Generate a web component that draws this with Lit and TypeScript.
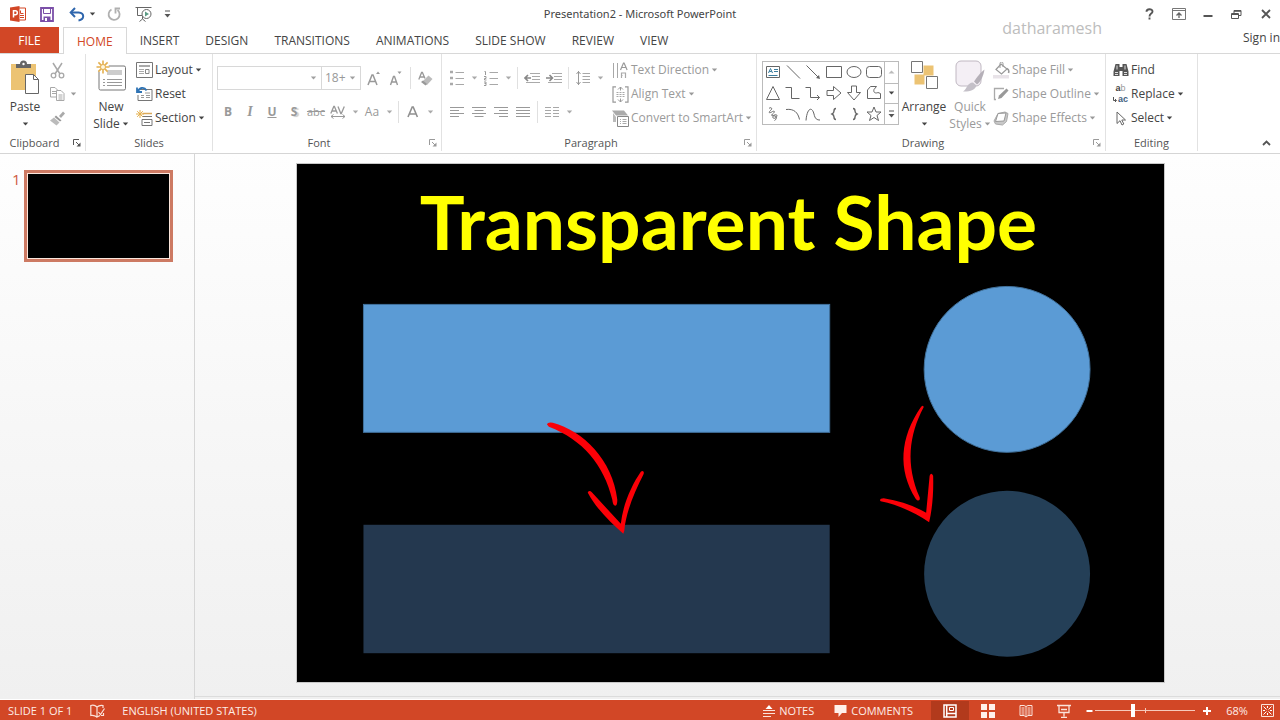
import { LitElement, html, svg, css, TemplateResult, SVGTemplateResult } from "lit";
import { customElement, property, state } from "lit/decorators.js";
import { classMap } from "lit/directives/class-map.js";

const G = "#767676";
const D = "#a8a8a8";

const pic = (w: number, h: number, body: SVGTemplateResult) =>
  html`<svg width=${w} height=${h} viewBox="0 0 ${w} ${h}" fill="none" aria-hidden="true">${body}</svg>`;

const icons: Record<string, TemplateResult> = {
  caret: pic(7, 4, svg`<path d="M.8 .5h5.400L3.500 3.500z" fill="currentColor"/>`),
  logo: pic(18, 18, svg`<path d="M9 3h7.500v12H9z" fill="#fff" stroke="#d24726"/><path d="M11.500 5.500v3h3M11 10.500h4M11 12.500h4" stroke="#d24726"/><path d="M1 2.500 10.500 1v16L1 15.500z" fill="#d24726"/><path d="M4.500 12.500V5.800H6.300a2 2 0 0 1 0 4H4.500" stroke="#fff" stroke-width="1.500"/>`),
  save: pic(14, 15, svg`<path d="M1 1h12v13H1z" stroke="#7b4fa8" stroke-width="1.800"/><path d="M3.500 1.500v5h7v-5" stroke="#7b4fa8"/><path d="M3.500 9.500h7V14h-7z" fill="#7b4fa8"/><path d="M5 11h2v3H5z" fill="#fff"/>`),
  undo: pic(16, 15, svg`<path d="M2 5.500H9.500C16 6 15.500 12.500 9.500 13.500" stroke="#2f66ad" stroke-width="2"/><path d="M6 1 1.700 5.500 6 10" stroke="#2f66ad" stroke-width="2"/>`),
  redo: pic(14, 15, svg`<path d="M4.500 2.500A5.500 5.500 0 1 0 10.500 3" stroke="#b0b0b0" stroke-width="1.800"/><path d="M8.500 6.500V1.500H13" stroke="#b0b0b0" stroke-width="1.800"/>`),
  startShow: pic(17, 17, svg`<path d="M.5 1.500h16M2.500 2v7.500h5M7.500 10v3M4.500 15.500l3-2.500 3 2.500" stroke="#666"/><circle cx="11.500" cy="8" r="4.500" fill="#fff" stroke="#666"/><path d="M10 5.500v5l4-2.500z" fill="#5a9b84"/>`),
  more: pic(7, 8, svg`<path d="M1 1h5" stroke="#555"/><path d="M.5 4h6l-3 3.500z" fill="#555"/>`),
  help: pic(9, 12, svg`<path d="M1.500 3.800C1.500 .5 7.500 .5 7.500 3.500 7.500 5.800 4.500 5.500 4.500 8.500M4.500 9.500v2" stroke="#555" stroke-width="1.900"/>`),
  ribbonOpt: pic(14, 12, svg`<path d="M.5 .5h13v11H.5zM.5 2.500h13" stroke="#777"/><path d="M7 10V5M4.500 7.500 7 5l2.500 2.500" stroke="#666" stroke-width="1.300"/>`),
  min: pic(10, 12, svg`<path d="M.5 8h9" stroke="#555" stroke-width="2"/>`),
  restore: pic(11, 11, svg`<path d="M.5 4.500h7v5h-7zM.5 5.500h7M3 4V1.500h7v5H8M3 2.300h7" stroke="#555"/>`),
  close: pic(10, 10, svg`<path d="m1 1 8 8M9 1 1 9" stroke="#555" stroke-width="1.800"/>`),
  paste: pic(30, 35, svg`<path d="M1 4h25v26H1z" fill="#ecc373"/><path d="M6 4h4a3.500 3.500 0 0 1 7 0h4v4H6z" fill="#666"/><circle cx="13.500" cy="4" r="1.200" fill="#fff"/><path d="M15.500 14.500h8l5 5v14h-13z" fill="#fff" stroke="#666"/><path d="M23.500 14.500v5h5" stroke="#666"/>`),
  cut: pic(15, 17, svg`<path d="m3 1 7 11M12 1 5 12" stroke="${D}" stroke-width="1.500"/><circle cx="3.500" cy="13.500" r="2.300" stroke="${D}" stroke-width="1.300"/><circle cx="11.500" cy="13.500" r="2.300" stroke="${D}" stroke-width="1.300"/>`),
  copy: pic(15, 14, svg`<path d="M.5 .5H5l2.500 2.500v7h-7z" stroke="${D}"/><path d="M2 4.500h4M2 6.500h4" stroke="${D}"/><path d="M6.500 3.500H11l3 3v7H6.500z" fill="#fff" stroke="${D}"/><path d="M8.500 8h4M8.500 10h4M8.500 12h4" stroke="${D}"/>`),
  brush: pic(16, 15, svg`<path d="m9 5 4-4.500 2 2L11 7z" fill="#aaa"/><path d="m6 4.500 5.500 5-1.500 1L4.500 6z" fill="#999"/><path d="M4 6.500 9.500 11.500 6.500 14.500 0 9.500z" fill="#bbb"/>`),
  newSlide: pic(31, 31, svg`<rect x="3" y="6" width="26.500" height="24" rx="1.500" fill="#fff" stroke="${G}"/><path d="M11 10h15v5H11z" fill="#ccc"/><path d="M7 19.500h2M11 19.500h15M7 22.500h2M11 22.500h15M7 25.500h2M11 25.500h15" stroke="#999"/><circle cx="7" cy="7" r="6" fill="#fff"/><path d="M7 .5v13M.5 7h13M2.400 2.400l9.200 9.200M11.600 2.400l-9.200 9.200" stroke="#e4b04f" stroke-width="1.600"/><circle cx="7" cy="7" r="2.500" fill="#fff6dd" stroke="#e4b04f"/>`),
  layout: pic(17, 16, svg`<path d="M.5 .5h16v15H.5z" stroke="${G}"/><path d="M3 3h11v2H3z" fill="#aaa"/><path d="M3 7.500h5M3 9.500h5M3 11.500h5" stroke="#aaa"/><path d="M9.500 7.500H13v4H9.500z" stroke="#888"/>`),
  reset: pic(17, 16, svg`<path d="M4 3.500h12v11H2V9" stroke="${G}"/><path d="M9 7h5M5 9.500h3M10 9.500h4M5 11.500h3M10 11.500h4" stroke="#999"/><path d="M2 5.500C3 2 8 0 10.500 4.500M1 1.500V6h5" stroke="#2f74b5" stroke-width="1.800"/>`),
  section: pic(17, 17, svg`<path d="M6.500 3.500H16" stroke="#dba95a" stroke-width="1.500"/><path d="M6 6.500h10" stroke="${G}"/><path d="M6 9.500h10v6H6zM8 12.500h6" stroke="${G}"/><path d="M4 0v8M0 4h8M1.200 1.200l5.600 5.600M6.800 1.200 1.200 6.800" stroke="#e4b04f"/>`),
  growFont: pic(14, 15, svg`<path d="m1 14 4-10h1l4 10M2.500 10.500h6" stroke="#999" stroke-width="1.500"/><path d="m9 3 2-2.500L13 3z" fill="#999"/>`),
  shrinkFont: pic(14, 15, svg`<path d="m1.500 14 3-8.500h1l3 8.500M3 11h4.500" stroke="#999" stroke-width="1.400"/><path d="m8.500 .5 2 2.500 2-2.500z" fill="#999"/>`),
  clear: pic(15, 15, svg`<path d="m.8 8.500 2.800-7h.8l2.600 6M2 6h4" stroke="#999" stroke-width="1.300"/><path d="M4 11 10.500 4.500l4 3.500L9 14z" fill="#bbb"/><path d="m3 11 2-1.500 4 3.500-1.500 1.500z" fill="#999"/>`),
  spacing: pic(16, 14, svg`<path d="m.8 8.500 3-7h.6l3 7M1.800 6h4.500M8 1.500l2.800 7h.5l3-7" stroke="#999" stroke-width="1.300"/><path d="M1 11.500h14M3.500 9.500l-2.500 2 2.500 2M12.500 9.500l2.500 2-2.500 2" stroke="#999"/>`),
  fontColor: pic(12, 12, svg`<path d="m1 11 4.200-10h1l4.200 10M2.500 8h6.500" stroke="#909090" stroke-width="1.600"/>`),
  bullets: pic(14, 16, svg`<path d="M0 2h3M0 8h3M0 14h3" stroke="#aaa" stroke-width="2.500"/><path d="M5.500 2.500H14M5.500 8.500H14M5.500 14.500H14" stroke="${D}"/>`),
  numbers: pic(14, 17, svg`<path d="M.5 1.500h1V5M0 6.500h2v2H.5V10h2M0 12h2v3.500H0M.5 13.500H2" stroke="#999"/><path d="M5.500 2.500H14M5.500 8.500H14M5.500 14.500H14" stroke="${D}"/>`),
  outdent: pic(16, 12, svg`<path d="M6 1.500h10M8 4.500h8M8 7.500h8M2 10.500h14" stroke="#aaa"/><path d="M7 6H1.500M4 3 1 6l3 3" stroke="#888" stroke-width="1.600"/>`),
  indent: pic(16, 12, svg`<path d="M6 1.500h10M8 4.500h8M8 7.500h8M2 10.500h14" stroke="#aaa"/><path d="M0 6h6M3.500 3l3 3-3 3" stroke="#888" stroke-width="1.600"/>`),
  lineGap: pic(15, 16, svg`<path d="M2.500 1v14M.5 4l2-2.500 2 2.500M.5 12l2 2.500 2-2.500" stroke="#999"/><path d="M6.500 3.500H14M6.500 6.500H14M6.500 9.500H14M6.500 12.500H14" stroke="${D}"/>`),
  left: pic(14, 12, svg`<path d="M0 1.500h14M0 4.500h9M0 7.500h14M0 10.500h9" stroke="#999"/>`),
  center: pic(14, 12, svg`<path d="M0 1.500h14M2.500 4.500h9M0 7.500h14M2.500 10.500h9" stroke="#999"/>`),
  right: pic(14, 12, svg`<path d="M0 1.500h14M5 4.500h9M0 7.500h14M5 10.500h9" stroke="#999"/>`),
  justify: pic(14, 12, svg`<path d="M0 1.500h14M0 4.500h14M0 7.500h14M0 10.500h14" stroke="#999"/>`),
  columns: pic(14, 12, svg`<path d="M0 1.500h6M0 4.500h6M0 7.500h6M0 10.500h6M8 1.500h6M8 4.500h6M8 7.500h6M8 10.500h6" stroke="${D}"/>`),
  direction: pic(17, 17, svg`<path d="M1.500 1v15M5.500 1v15" stroke="${D}"/><path d="m8.500 8 3-7h.6l3 7M9.800 5.500h4.500" stroke="#999" stroke-width="1.200"/><path d="M9.500 16v-5h4v5M9.500 13.500h1" stroke="${D}" stroke-width="1.200"/>`),
  alignText: pic(17, 17, svg`<path d="M4 .8H1v15.400h3M13 .8h3v15.400h-3" stroke="#999" stroke-width="1.200"/><path d="M8.500 1v3.500M6 3.500l2.500-2.500L11 3.500M8.500 16v-3.500M6 13.500l2.500 2.500 2.500-2.500" stroke="#999"/><path d="M4.500 6.500h8M4.500 8.500h8M4.500 10.500h8" stroke="${D}" stroke-dasharray="2 1"/>`),
  smartArt: pic(17, 17, svg`<path d="M0 .5h12l4 5H4z" fill="#aaa"/><path d="m1 3 3 4v5H1z" fill="#bbb"/><path d="M5.500 6.500h11v10h-11z" fill="#fff" stroke="#888"/><path d="M8 9.500h1M10.500 9.500h4M8 11.500h1M10.500 11.500h4M8 13.500h1M10.500 13.500h4" stroke="#aaa"/>`),
  arrange: pic(28, 30, svg`<path d="M13.500 5.500h10v10h-10z" fill="#ecc373"/><path d="M4.500 14.500h10v10h-10z" fill="#ecc373"/><path d="M1.500 1.500h11v11h-11z" fill="#fff" stroke="${G}"/><path d="M16.500 16.500h11v12h-11z" fill="#fff" stroke="${G}"/>`),
  quick: pic(30, 33, svg`<rect x="1" y="1" width="25" height="25" rx="5" fill="#f4eff5" stroke="#c0b8c2"/><path d="M29.500 9.500c-3 2-8 8-10.500 12l3 3c4-3 6.500-9 7.500-15z" fill="#b5b0b8"/><path d="M18 22.500l3.500 3c-2 6-9 6-13.500 6 4-2 4-9 10-9z" fill="#c4c0c8"/>`),
  fill: pic(17, 17, svg`<path d="M3 7.500 8 2l6 5-5.500 5z" fill="#fff" stroke="#999" stroke-width="1.200"/><path d="M7 6V1.500a1.500 1.500 0 0 1 3 0V5" stroke="#999"/><path d="M14 6.500c2 1 2 3 1.500 4.500" stroke="#999" stroke-width="1.600"/><path d="M0 13h16v3.500H0z" fill="#e8e3e8"/>`),
  outline: pic(17, 15, svg`<path d="M11 1.500H1.500v11H3" stroke="#aaa" stroke-width="1.300"/><path d="m5 12 1-3.500 7.500-7 2 2L8.500 11z" fill="#999"/>`),
  effects: pic(17, 15, svg`<path d="M5 2.500 12 1l3 1.500-1.500 8-4 3.500-7-1L1 10z" fill="#c8c8c8" stroke="#aaa"/><path d="m5 2.500 8-.5-2 8-8.500.5z" fill="#fff" stroke="#999"/>`),
  find: pic(16, 14, svg`<path d="M2.500 1h4v3h3V1h4l2 7.500V13H9.500V8h-3v5H.5V8.500z" fill="#555"/><path d="M2 9.500h3M11 9.500h3M2 11.500h3M11 11.500h3M4 2.500v4M12 2.500v4" stroke="#ddd"/>`),
  replace: html`<span class="rep"><span>a<i>b</i></span><span class="second">${pic(4, 6, svg`<path d="M.5 0v3.500H3M2 2l1.500 1.500L2 5" stroke="#555"/>`)}ac</span></span>`,
  select: pic(10, 15, svg`<path d="M1 1v11.500l3-2.800 2 4.300 1.800-1-2-4H9.500z" fill="#fff" stroke="#666"/>`),
  launcher: pic(8, 8, svg`<path d="M.5 6V.5H6" stroke="currentColor"/><path d="m3 3 3.500 3.500" stroke="currentColor"/><path d="M7.500 3.500v4h-4z" fill="currentColor"/>`),
  collapse: pic(9, 6, svg`<path d="m1 5 3.500-3.500L8 5" stroke="#555" stroke-width="1.800"/>`),
  proof: pic(15, 14, svg`<path d="M7 3C5 1 2 1 .8 1.500v10C3 11 5 11.500 7 13M7 3v10l3-1.500M7 3c1.500-1.300 3.500-2 6-1.500V4" stroke="#fbe3db" stroke-width="1.200"/><path d="m8.500 8 2 2.500 4-6M11 11.500h2.500V9" stroke="#fbe3db" stroke-width="1.200"/>`),
  notes: pic(12, 13, svg`<path d="m2.500 5 3.500-4 3.500 4z" fill="#fff"/><path d="M0 6.500h12M0 9.500h12M0 12.500h8" stroke="#fbe3db"/>`),
  comment: pic(13, 13, svg`<path d="M.5 1h12v8H8l-3.500 4V9h-4z" fill="#fff0ea"/>`),
  normal: pic(14, 14, svg`<path d="M1 1h12v12H1zM3.700 1v12M4 9.500h9" stroke="#fff" stroke-width="1.500"/><path d="M6.500 3.500h4v3h-4z" stroke="#fff"/>`),
  sorter: pic(14, 14, svg`<path d="M0 0h6v6H0zM8 0h6v6H8zM0 8h6v6H0zM8 8h6v6H8z" fill="#fff0ea"/>`),
  reading: pic(14, 14, svg`<path d="M1 1.500h4l2 1 2-1h4v10H9l-2 1.500-2-1.500H1zM7 2.500V13M2.500 4h3M2.500 6h3M2.500 8h3M8.500 4h3M8.500 6h3M8.500 8h3M2.500 10h3M8.500 10h3" stroke="#fbe3db"/>`),
  show: pic(14, 14, svg`<path d="M0 1.500h14M2 2v6.500h10V2M4 5.500h6M7 9v3.500M4 13.500h6" stroke="#fbe3db" stroke-width="1.300"/>`),
  minus: pic(7, 10, svg`<path d="M.5 5h6" stroke="#fff" stroke-width="2"/>`),
  plus: pic(8, 10, svg`<path d="M0 5h8M4 1v8" stroke="#fff" stroke-width="2"/>`),
  fit: pic(13, 13, svg`<path d="M.5 .5h12v12H.5z" stroke="#fbe3db"/><path d="M2.500 2.500l3 3M10.500 2.500l-3 3M2.500 10.500l3-3M10.500 10.500l-3-3M6.500 2v2M6.500 9v2M2 6.500h2M9 6.500h2" stroke="#fff"/>`),
};

const shapeIcons: [string, SVGTemplateResult][] = [
  ["Text Box", svg`<path d="M1.500 2.500h13v11h-13z" stroke="#666"/><path d="m3.500 9 2-4.500 2 4.500M4.200 7.500h2.500M9 5.500h4M9 7.500h4M3.500 11.500h9" stroke="#3b7d9e"/>`],
  ["Line", svg`<path d="m2 1.500 13 13"/>`],
  ["Arrow", svg`<path d="m1.500 1.500 12 12"/><path d="m15 15-1-4-3 3z" fill="#666" stroke="none"/>`],
  ["Rectangle", svg`<path d="M.5 2.500h15v11H.5z"/>`],
  ["Oval", svg`<ellipse cx="8" cy="8" rx="7" ry="5.500"/>`],
  ["Rounded Rectangle", svg`<rect x=".5" y="2.500" width="15" height="11" rx="3"/>`],
  ["Triangle", svg`<path d="M8 1.500 14.500 14.500h-13z"/>`],
  ["Elbow Connector", svg`<path d="M.5 2.500h6v11h8"/>`],
  ["Elbow Arrow", svg`<path d="M.5 2.500h5v10h9M12 10l2.500 2.500-2.500 2.500"/>`],
  ["Right Arrow", svg`<path d="M1 5.500h6.500v-4L15 8l-7.500 6.500v-4H1z"/>`],
  ["Down Arrow", svg`<path d="M5.500 1h5v6.500h4L8 15 1.500 7.500h4z"/>`],
  ["Freeform", svg`<path d="M1.500 13.500V5l3-3.500h6L8 4.500C7 8 10 8.500 12 7.500l2.500 1v5z"/>`],
  ["Scribble", svg`<path d="M4 2.500c2-2 4 0 1.500 2-3 3 0 2.500 2 1 3-1 2 1 0 2.500-2 2 0 2 2 1 3-1 3 1 1 3-2 1-4-1-2-2 3-1 4 3 1 4.500"/>`],
  ["Arc", svg`<path d="M1 3.500c8-1 12 3 13.500 10"/>`],
  ["Curve", svg`<path d="M1 14.500C2 2 7 0 9 8c1 5 3 6 6 6"/>`],
  ["Left Brace", svg`<path d="M10 2.500c-2 0-2 1-2 2.500s0 2-2 3c2 1 2 1.500 2 3s0 2.500 2 2.500" stroke-width="1.400"/>`],
  ["Right Brace", svg`<path d="M7 2.500c2 0 2 1 2 2.500s0 2 2 3c-2 1-2 1.500-2 3s0 2.500-2 2.500" stroke-width="1.400"/>`],
  ["Star", svg`<path d="m8 1 2 5h5l-4 3.500 1.500 5L8 11.500l-4.500 3 1.500-5L1 6h5z"/>`],
];

@customElement("app-root")
export class AppRoot extends LitElement {
  @state() private zoom = 37;
  @property({ type: String }) active = "HOME";

  static styles = css`
    :host {
      display: flex;
      flex-direction: column;
      min-height: 100vh;
      overflow: hidden;
      background: #fff;
      color: #444;
      font: 12px/16px "Open Sans", "Noto Sans", sans-serif;
      position: relative;
    }
    * { box-sizing: border-box; }
    svg { display: block; flex: none; }
    button, select {
      font: inherit;
      color: inherit;
      background: none;
      border: 0;
      padding: 0;
      margin: 0;
      white-space: nowrap;
    }
    button { display: flex; align-items: center; justify-content: center; }
    .off { color: #9a9a9a; }

    .titlebar { display: grid; grid-template-columns: 1fr auto 1fr; align-items: center; height: 27px; }
    .titlebar h1 { margin: 0; font: 400 11px/28px "Noto Sans", sans-serif; }
    .quick-bar { display: flex; align-items: center; padding-left: 8px; }
    .quick-bar button { width: 20px; margin-right: 9px; height: 24px; }
    .quick-bar .undo { width: 28px; gap: 4px; margin-right: 8px; margin-left: 2px; }
    .quick-bar .more { width: 8px; margin: 0; }
    .quick-bar .show { margin-right: 10px; }
    .window { display: flex; justify-content: flex-end; }
    .window button { width: 29px; height: 24px; }
    .watermark { position: absolute; top: 16px; right: 178px; font: 16px/24px "Open Sans", sans-serif; color: #bdbdbd; }

    .tabs { display: flex; height: 27px; border-bottom: 1px solid #d8d8d8; align-items: stretch; }
    .tabs button { padding: 2px 13px 0; color: #444; }
    .tabs .file { background: #d24726; color: #fff; width: 59px; margin-right: 4px; }
    .tabs .on { color: #d24726; border: 1px solid #d8d8d8; border-bottom: 0; background: #fff; margin-bottom: -1px; }
    .tabs .sign { margin-left: auto; padding: 0; align-items: flex-start; line-height: 22px; }

    .ribbon { display: flex; height: 100px; border-bottom: 1px solid #d5d5d5; background: #fff; }
    .group { display: flex; flex-direction: column; padding-top: 4px; border-right: 1px solid #e2e2e2; margin-bottom: 2px; }
    .body { flex: 1; display: flex; align-items: flex-start; }
    .foot { display: flex; align-items: center; text-align: center; height: 16px; font-size: 11px; color: #555; }
    .foot .name { flex: 1; }
    .foot button { width: 16px; height: 16px; }
    .g-clip { width: 86px; }
    .g-slides { width: 127px; }
    .g-font { width: 229px; }
    .g-font .body { padding-left: 4px; }
    .g-para { width: 315px; }
    .g-para .body { padding-left: 4px; }
    .g-para .stack { margin-left: 6px; }
    .g-draw { width: 349px; }
    .g-draw .big { width: 46px; }
    .g-edit { width: 92px; }
    .g-edit .body { padding-left: 6px; }
    .rest { flex: 1; display: flex; align-items: flex-end; justify-content: flex-end; padding: 0 9px 7px 0; }

    .big { flex: none; flex-direction: column; justify-content: flex-start; width: 50px; height: 74px; padding-top: 2px; }
    .big .pict { height: 38px; display: flex; align-items: flex-start; }
    .big .line { line-height: 17px; display: flex; align-items: center; gap: 2px; min-height: 17px; }
    .stack { display: grid; grid-auto-rows: 24px; }
    .item { justify-content: flex-start; gap: 2px; }
    .item .pict { width: 17px; display: flex; justify-content: center; }
    .tiny { width: 34px; justify-content: flex-start; gap: 5px; }

    .col { display: flex; flex-direction: column; padding-top: 8px; }
    .row { display: flex; align-items: center; height: 24px; }
    .row + .row { margin-top: 10px; }
    .tool { width: 22px; height: 22px; color: #999; }
    .drop { width: 12px; height: 22px; color: #aaa; }
    .sep { width: 1px; height: 22px; background: #e0e0e0; margin: 0 3px; }
    .b { font-weight: 700; }
    .i { font-style: italic; font-family: "Liberation Serif", serif; font-size: 14px; font-weight: 700; }
    .u { text-decoration: underline; font-weight: 700; }
    .s { font-weight: 700; text-shadow: 2px 1px 1px #ccc; }
    .k { text-decoration: line-through; font-size: 11px; }
    .combo { display: grid; align-items: center; height: 24px; border: 1px solid #d8d8d8; color: #a0a0a0; }
    .combo select { grid-area: 1 / 1; width: 100%; height: 22px; appearance: none; padding: 0 3px; color: #999; }
    .combo .mark { grid-area: 1 / 1; justify-self: end; padding-right: 4px; pointer-events: none; }
    .face { width: 105px; }
    .size { width: 40px; margin-left: -1px; margin-right: 2px; }

    .gallery { flex: none; display: grid; grid-template-columns: 1fr 14px; width: 137px; height: 64px; margin: 3px 2px 0 5px; border: 1px solid #bbb; }
    .shapes { display: grid; grid-template-columns: repeat(6, 1fr); grid-template-rows: repeat(3, 1fr); }
    .scroll { display: grid; grid-template-rows: repeat(3, 1fr); border-left: 1px solid #bbb; }
    .scroll button + button { border-top: 1px solid #bbb; }
    .rep { display: flex; flex-direction: column; font: 700 9px/11px "Liberation Sans", sans-serif; }
    .rep i { font-style: normal; font-weight: 400; color: #999; }
    .second { display: flex; align-items: center; gap: 1px; color: #41617f; }

    .work { flex: 1; display: flex; background: linear-gradient(#fefefe, #f0f0f0); border-bottom: 1px solid #fff; }
    .thumbs { width: 195px; border-right: 1px solid #d6d6d6; display: flex; align-items: flex-start; gap: 4px; padding: 16px 0 0 12px; }
    .thumbs .num { font-size: 15px; line-height: 18px; color: #cf5b42; width: 8px; }
    .thumbs .thumb { flex: none; width: 149px; height: 92px; border: 3px solid #cd7a63; padding: 1px; background: #fbe6dc; }
    .thumb span { display: block; width: 100%; height: 100%; background: #000; }
    .stage { flex: 1; display: flex; flex-direction: column; align-items: center; padding: 10px 14px 0 0; }
    .slide { width: 81%; aspect-ratio: 868 / 518; position: relative; background: #000; outline: 1px solid #c8c8c8; }
    .slide svg { width: 100%; height: 100%; }
    .slide h2 { position: absolute; inset: 0 4px auto 0; margin: 0; text-align: center; color: #ff0; font: 700 75px/114px "Lato", sans-serif; }
    .notes-edge { align-self: stretch; margin: auto -14px 2px 0; border-top: 1px solid #dcdcdc; }

    .status { display: flex; align-items: center; height: 20px; background: #d24726; color: #fdece6; font-size: 11px; padding: 1px 6px 0 8px; }
    .status button { height: 19px; gap: 4px; }
    .status .proof { margin: 0 17px 0 18px; }
    .status .push { margin-left: auto; }
    .status .comments { margin: 0 18px 0 20px; }
    .status .view { width: 38px; }
    .status .cur { background: #b23a1c; }
    .zoom { display: grid; align-items: center; width: 100px; }
    .zoom input { grid-area: 1 / 1; width: 100%; margin: 0; height: 14px; appearance: none; background: linear-gradient(#f6c9bb, #f6c9bb) center / 100% 1px no-repeat; }
    .zoom input::-webkit-slider-thumb { appearance: none; width: 4px; height: 13px; background: #fff; }
    .zoom .tick { grid-area: 1 / 1; justify-self: center; width: 1px; height: 5px; background: #f6c9bb; }
    .status .out { width: 12px; }
    .status .in { width: 24px; }
    .status .pct { width: 42px; padding-right: 6px; }
  `;

  private big(icon: string, l1: string, l2 = "", off = false) {
    return html`<button class=${classMap({ big: true, off })}>
      <span class="pict">${icons[icon]}</span><span class="line">${l1}</span><span class="line">${l2}${icons.caret}</span>
    </button>`;
  }
  private item(icon: string, text: string, caret = true, off = false) {
    return html`<button class=${classMap({ item: true, off })}>
      <span class="pict">${icons[icon]}</span><span>${text}</span>${caret ? icons.caret : ""}
    </button>`;
  }
  private tool(icon: string, label: string) {
    return html`<button class="tool" aria-label=${label}>${icons[icon]}</button>`;
  }
  private drop() {
    return html`<button class="drop" aria-label="More options">${icons.caret}</button>`;
  }
  private group(cls: string, name: string, body: TemplateResult, launch = "") {
    return html`<section class="group ${cls}" aria-label=${name}>
      <div class="body">${body}</div>
      <div class="foot"><span class="name">${name}</span>
        ${launch ? html`<button class=${launch} aria-label="${name} settings">${icons.launcher}</button>` : ""}</div>
    </section>`;
  }

  render() {
    const sep = html`<span class="sep"></span>`;
    return html`
      <header class="titlebar">
        <div class="quick-bar">
          <button aria-label="PowerPoint">${icons.logo}</button>
          <button aria-label="Save">${icons.save}</button>
          <button class="undo" aria-label="Undo">${icons.undo}${icons.caret}</button>
          <button aria-label="Redo">${icons.redo}</button>
          <button class="show" aria-label="Start From Beginning">${icons.startShow}</button>
          <button class="more" aria-label="Customize">${icons.more}</button>
        </div>
        <h1>Presentation2 - Microsoft PowerPoint</h1>
        <div class="window">
          ${["help", "ribbonOpt", "min", "restore", "close"].map((n) => html`<button aria-label=${n}>${icons[n]}</button>`)}
        </div>
      </header>
      <span class="watermark">datharamesh</span>

      <nav class="tabs">
        <button class="file">FILE</button>
        ${["HOME", "INSERT", "DESIGN", "TRANSITIONS", "ANIMATIONS", "SLIDE SHOW", "REVIEW", "VIEW"].map(
          (t) => html`<button class=${classMap({ on: t === this.active })} @click=${() => (this.active = t)}>${t}</button>`
        )}
        <button class="sign">Sign in</button>
      </nav>

      <div class="ribbon">
        ${this.group("g-clip", "Clipboard", html`
          ${this.big("paste", "Paste")}
          <div class="stack off">
            <button class="tiny" aria-label="Cut">${icons.cut}</button>
            <button class="tiny" aria-label="Copy">${icons.copy}${icons.caret}</button>
            <button class="tiny" aria-label="Format Painter">${icons.brush}</button>
          </div>`, "on")}
        ${this.group("g-slides", "Slides", html`
          ${this.big("newSlide", "New", "Slide")}
          <div class="stack">
            ${this.item("layout", "Layout")}${this.item("reset", "Reset", false)}${this.item("section", "Section")}
          </div>`)}
        ${this.group("g-font", "Font", html`
          <div class="col">
            <div class="row">
              <label class="combo face"><select aria-label="Font"><option></option></select><span class="mark">${icons.caret}</span></label>
              <label class="combo size"><select aria-label="Font Size"><option>18+</option></select><span class="mark">${icons.caret}</span></label>
              ${this.tool("growFont", "Increase Font Size")}${this.tool("shrinkFont", "Decrease Font Size")}${sep}
              ${this.tool("clear", "Clear Formatting")}
            </div>
            <div class="row">
              <button class="tool b">B</button><button class="tool i">I</button><button class="tool u">U</button>
              <button class="tool s">S</button><button class="tool k">abc</button>
              ${this.tool("spacing", "Character Spacing")}${this.drop()}
              <button class="tool">Aa</button>${this.drop()}${sep}
              ${this.tool("fontColor", "Font Color")}${this.drop()}
            </div>
          </div>`, "off")}
        ${this.group("g-para", "Paragraph", html`
          <div class="col">
            <div class="row">
              ${this.tool("bullets", "Bullets")}${this.drop()}${this.tool("numbers", "Numbering")}${this.drop()}${sep}
              ${this.tool("outdent", "Decrease List Level")}${this.tool("indent", "Increase List Level")}${sep}
              ${this.tool("lineGap", "Line Spacing")}${this.drop()}
            </div>
            <div class="row">
              ${this.tool("left", "Align Left")}${this.tool("center", "Center")}${this.tool("right", "Align Right")}${this.tool("justify", "Justify")}${sep}
              ${this.tool("columns", "Columns")}${this.drop()}
            </div>
          </div>
          <div class="stack">
            ${this.item("direction", "Text Direction", true, true)}${this.item("alignText", "Align Text", true, true)}${this.item("smartArt", "Convert to SmartArt", true, true)}
          </div>`, "off")}
        ${this.group("g-draw", "Drawing", html`
          <div class="gallery">
            <div class="shapes">
              ${shapeIcons.map(([n, s]) => html`<button aria-label=${n}><svg width="16" height="16" viewBox="0 0 16 16" fill="none" stroke="#666">${s}</svg></button>`)}
            </div>
            <div class="scroll">
              <button class="off" aria-label="Up">${pic(7, 4, svg`<path d="M.5 3.500h6l-3-3z" fill="#bbb"/>`)}</button>
              <button aria-label="Down">${icons.caret}</button>
              <button aria-label="All shapes">${icons.more}</button>
            </div>
          </div>
          ${this.big("arrange", "Arrange")}${this.big("quick", "Quick", "Styles", true)}
          <div class="stack">
            ${this.item("fill", "Shape Fill", true, true)}${this.item("outline", "Shape Outline", true, true)}${this.item("effects", "Shape Effects", true, true)}
          </div>`, "off")}
        ${this.group("g-edit", "Editing", html`
          <div class="stack">
            ${this.item("find", "Find", false)}${this.item("replace", "Replace")}${this.item("select", "Select")}
          </div>`)}
        <div class="rest"><button aria-label="Collapse the Ribbon">${icons.collapse}</button></div>
      </div>

      <main class="work">
        <aside class="thumbs"><span class="num">1</span><button class="thumb" aria-label="Slide 1"><span></span></button></aside>
        <div class="stage">
          <article class="slide">
            <svg viewBox="297 164 868 518" preserveAspectRatio="none">
              <rect x="363.500" y="304.500" width="466.500" height="128" fill="#5b9bd5" stroke="#41719c"/>
              <rect x="363.500" y="525" width="466.500" height="128.500" fill="#24384f"/>
              <circle cx="1007.500" cy="369.500" r="83" fill="#5b9bd5" stroke="#41719c"/>
              <circle cx="1007.500" cy="574" r="83" fill="#243f57"/>
              <g fill="#fb0007">
                <path d="M547 424.500Q548 422 553 423C583 431 613 460 617.500 500Q617.500 506 615.500 506 613 506 612.500 500C604 465 583 440 549 427Z"/>
                <path d="M588 492.500Q589.500 490 592 492.500L621 524C623 505 632 485 641 472 643 470 645 472 643.500 475 635 492 626 512 624.500 531L623.500 534C610 522 595 507 588 493Z"/>
                <path d="M921.500 407Q924 404.500 924 407.500C909 436 906 465 920 497.500 921 501 918 502 916 499 898 470 900 438 921.500 407Z"/>
                <path d="M880.500 501Q880 498.500 884 498.500C900 501 914 506 926.500 513L930 476Q931.500 472 933.500 476C934 490 933 508 929.500 522.500 914 512 898 505 881 501.500Z"/>
              </g>
            </svg>
            <h2>Transparent Shape</h2>
          </article>
          <div class="notes-edge"></div>
        </div>
      </main>

      <footer class="status">
        <span>SLIDE 1 OF 1</span>
        <button class="proof" aria-label="Spelling">${icons.proof}</button>
        <button>ENGLISH (UNITED STATES)</button>
        <button class="push">${icons.notes}NOTES</button>
        <button class="comments">${icons.comment}COMMENTS</button>
        <button class="view cur" aria-label="Normal">${icons.normal}</button>
        <button class="view" aria-label="Slide Sorter">${icons.sorter}</button>
        <button class="view" aria-label="Reading View">${icons.reading}</button>
        <button class="view" aria-label="Slide Show">${icons.show}</button>
        <button class="out" aria-label="Zoom Out">${icons.minus}</button>
        <label class="zoom"><input type="range" aria-label="Zoom" .value=${String(this.zoom)} @input=${(e: Event) => (this.zoom = +(e.target as HTMLInputElement).value)} /><span class="tick"></span></label>
        <button class="in" aria-label="Zoom In">${icons.plus}</button>
        <button class="pct">68%</button>
        <button aria-label="Fit slide to window">${icons.fit}</button>
      </footer>
    `;
  }
}
